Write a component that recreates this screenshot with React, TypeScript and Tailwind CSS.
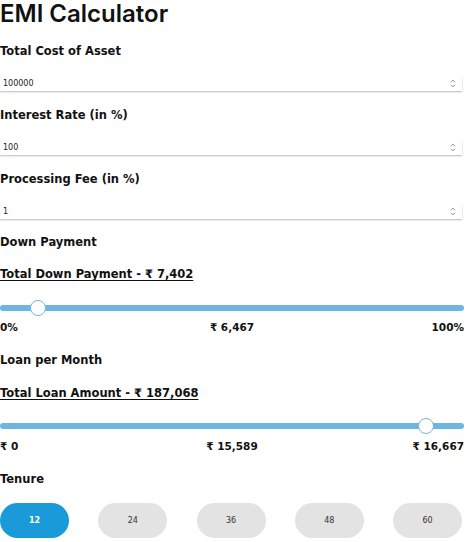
import React from "react";

const font = { fontFamily: '"DejaVu Sans", "Noto Sans", sans-serif' };
const titleFont = { fontFamily: 'Inter, "Noto Sans", sans-serif' };

function Spinner() {
  return (
    <svg width="6" height="9" viewBox="0 0 6 9" className="shrink-0">
      <path d="M1 3.2 L3 1.2 L5 3.2" fill="none" stroke="#777" strokeWidth="0.9" />
      <path d="M1 5.8 L3 7.8 L5 5.8" fill="none" stroke="#777" strokeWidth="0.9" />
    </svg>
  );
}

function NumInput({ value, className }: { value: string; className?: string }) {
  return (
    <div
      className={`flex h-[15px] w-[462px] items-center justify-between bg-white pl-[3px] pr-[6px] shadow-[0_1px_1.5px_rgba(0,0,0,0.28)] ${className ?? ""}`}
    >
      <span className="text-[8px] leading-none text-[#222]">{value}</span>
      <Spinner />
    </div>
  );
}

function Label({ children, className }: { children: React.ReactNode; className?: string }) {
  return (
    <div className={`h-[16px] text-[11.5px] font-semibold leading-[16px] text-[#111] ${className ?? ""}`}>
      {children}
    </div>
  );
}

function Slider({ pos, className }: { pos: number; className?: string }) {
  return (
    <div className={`relative flex h-[16px] w-[464px] items-center ${className ?? ""}`}>
      <div className="h-[6px] w-full rounded-full bg-[#6cb6e0]" />
      <div
        className="absolute top-0 h-[16px] w-[16px] -translate-x-1/2 rounded-full border-[1.5px] border-[#7ab4d8] bg-white"
        style={{ left: pos }}
      />
    </div>
  );
}

function Ticks({ items, className }: { items: [string, string, string]; className?: string }) {
  return (
    <div className={`grid h-[16px] w-[464px] grid-cols-3 items-center text-[10.5px] font-semibold leading-[16px] text-[#111] ${className ?? ""}`}>
      <span className="text-left">{items[0]}</span>
      <span className="text-center">{items[1]}</span>
      <span className="text-right">{items[2]}</span>
    </div>
  );
}

export default function App() {
  const tenures = ["12", "24", "36", "48", "60"];
  return (
    <div className="h-[542px] w-[474px] overflow-hidden bg-white" style={font}>
      <div className="flex flex-col">
        <div className="h-[28px] text-[24px] font-semibold leading-[28px] text-[#111]" style={titleFont}>
          EMI Calculator
        </div>
        <Label className="mt-[15px]">Total Cost of Asset</Label>
        <NumInput value="100000" className="mt-[17px]" />
        <Label className="mt-[16px]">Interest Rate (in %)</Label>
        <NumInput value="100" className="mt-[17px]" />
        <Label className="mt-[16px]">Processing Fee (in %)</Label>
        <NumInput value="1" className="mt-[17px]" />
        <Label className="mt-[15px]">Down Payment</Label>
        <Label className="mt-[16px] underline underline-offset-[2px]">Total Down Payment - ₹ 7,402</Label>
        <Slider pos={38} className="mt-[18px]" />
        <Ticks items={["0%", "₹ 6,467", "100%"]} className="mt-[3px]" />
        <Label className="mt-[17px]">Loan per Month</Label>
        <Label className="mt-[17px] underline underline-offset-[2px]">Total Loan Amount - ₹ 187,068</Label>
        <Slider pos={426} className="mt-[17px]" />
        <Ticks items={["₹ 0", "₹ 15,589", "₹ 16,667"]} className="mt-[4px]" />
        <Label className="mt-[17px]">Tenure</Label>
        <div className="mt-[16px] flex w-[462px] justify-between">
          {tenures.map((t, i) => (
            <div
              key={t}
              className={`flex h-[35px] w-[69px] items-center justify-center rounded-full text-[8px] ${
                i === 0 ? "bg-[#1a9ad8] font-semibold text-white" : "bg-[#e3e3e3] text-[#333]"
              }`}
            >
              {t}
            </div>
          ))}
        </div>
      </div>
    </div>
  );
}
